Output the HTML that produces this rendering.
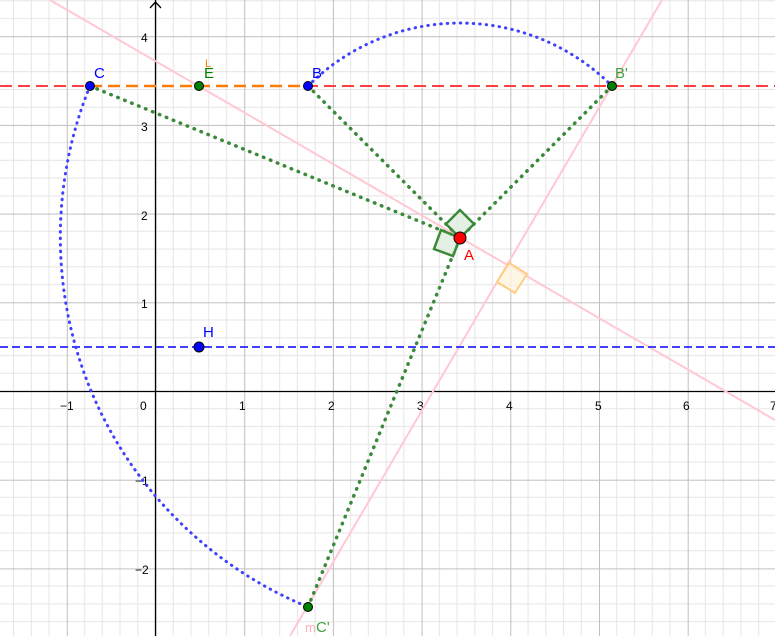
<!DOCTYPE html>
<html><head><meta charset="utf-8"><style>
html,body{margin:0;padding:0;background:#fff;overflow:hidden}
svg{display:block}
text{font-family:"Liberation Sans",sans-serif}
</style></head><body>
<svg width="775" height="636" viewBox="0 0 775 636" xmlns="http://www.w3.org/2000/svg">
<defs>
<pattern id="g" patternUnits="userSpaceOnUse" x="155.5" y="391" width="88.7" height="88.7">
<path d="M17.74 0V88.7M35.48 0V88.7M53.22 0V88.7M70.96 0V88.7M0 17.74H88.7M0 35.48H88.7M0 53.22H88.7M0 70.96H88.7" stroke="#e5e5e5" stroke-width="1" fill="none"/>
<path d="M0.5 0V88.7M0 0.5H88.7" stroke="#c0c0c0" stroke-width="1" fill="none"/>
</pattern>
</defs>
<rect width="775" height="636" fill="#fff"/>
<rect width="775" height="636" fill="url(#g)"/>
<line x1="155.5" y1="0" x2="155.5" y2="636" stroke="#000" stroke-width="1.3"/>
<line x1="0" y1="391.5" x2="775" y2="391.5" stroke="#000" stroke-width="1.3"/>
<path d="M150 8L155.5 2L161 8" stroke="#000" fill="none" stroke-width="1.3"/>
<g font-size="12" fill="#000">
<text x="60" y="410">−1</text><text x="140" y="410">0</text><text x="239" y="410">1</text>
<text x="328" y="410">2</text><text x="417" y="410">3</text><text x="506" y="410">4</text>
<text x="595" y="410">5</text><text x="683" y="410">6</text><text x="770" y="410">7</text>
<text x="141" y="42">4</text><text x="141" y="131">3</text><text x="141" y="220">2</text>
<text x="141" y="308">1</text><text x="135" y="485">−1</text><text x="135" y="574">−2</text>
</g>
<line x1="50" y1="0" x2="775" y2="420" stroke="#ffc8d2" stroke-width="2"/>
<line x1="662" y1="0" x2="290" y2="636" stroke="#ffc8d2" stroke-width="2"/>
<path d="M497 282L509 263L527 274L515 293Z" fill="#fff5e0" fill-opacity="0.8" stroke="#ffcc80" stroke-width="2"/>
<line x1="0" y1="86" x2="775" y2="86" stroke="#ff4040" stroke-width="2" stroke-dasharray="12,6"/>
<line x1="90" y1="86" x2="308" y2="86" stroke="#ff8000" stroke-width="2.5" stroke-dasharray="12,6" opacity="0.9"/>
<line x1="0" y1="347" x2="775" y2="347" stroke="#4040ff" stroke-width="2" stroke-dasharray="8,4"/>
<path d="M308 86A215 215 0 0 1 612 86" stroke="#4040ff" stroke-width="3" fill="none" stroke-dasharray="0.5,6" stroke-linecap="round"/>
<path d="M90 86A400 400 0 0 0 308 607" stroke="#4040ff" stroke-width="3" fill="none" stroke-dasharray="0.5,6" stroke-linecap="round"/>
<g stroke="#3a8a3a" stroke-width="3.5" stroke-dasharray="0.5,7" stroke-linecap="round" fill="none">
<line x1="90" y1="86" x2="460" y2="238"/>
<line x1="308" y1="86" x2="460" y2="238"/>
<line x1="612" y1="86" x2="460" y2="238"/>
<line x1="308" y1="607" x2="460" y2="238"/>
</g>
<path d="M446 224L460 210L474 224L460 238Z" fill="#dfecdf" fill-opacity="0.8" stroke="#3a8a3a" stroke-width="2.5"/>
<path d="M460 238L441 230L434 249L453 256Z" fill="#dfecdf" fill-opacity="0.8" stroke="#3a8a3a" stroke-width="2.5"/>
<g stroke="#000" stroke-width="1">
<circle cx="90" cy="86" r="4.5" fill="#0000ff"/>
<circle cx="308" cy="86" r="4.5" fill="#0000ff"/>
<circle cx="199" cy="347" r="5" fill="#0000ff"/>
<circle cx="199" cy="86" r="4.5" fill="#008000"/>
<circle cx="612" cy="86" r="4.5" fill="#008000"/>
<circle cx="308" cy="607" r="4.5" fill="#008000"/>
<circle cx="460" cy="238" r="6" fill="#ff0000"/>
</g>
<g font-size="15">
<text x="94" y="78" fill="#0000ff">C</text>
<text x="312" y="78" fill="#0000ff">B</text>
<text x="203" y="337" fill="#0000ff">H</text>
<text x="204" y="78" fill="#008000">E</text>
<text x="205" y="67" fill="#ff8000" font-size="11">L</text>
<text x="615" y="78" fill="#40a040">B'</text>
<text x="316" y="632" fill="#40a040">C'</text>
<text x="305" y="632" fill="#ffb0c0" font-size="13">m</text>
<text x="464" y="260" fill="#ff0000">A</text>
</g>
</svg>
</body></html>
